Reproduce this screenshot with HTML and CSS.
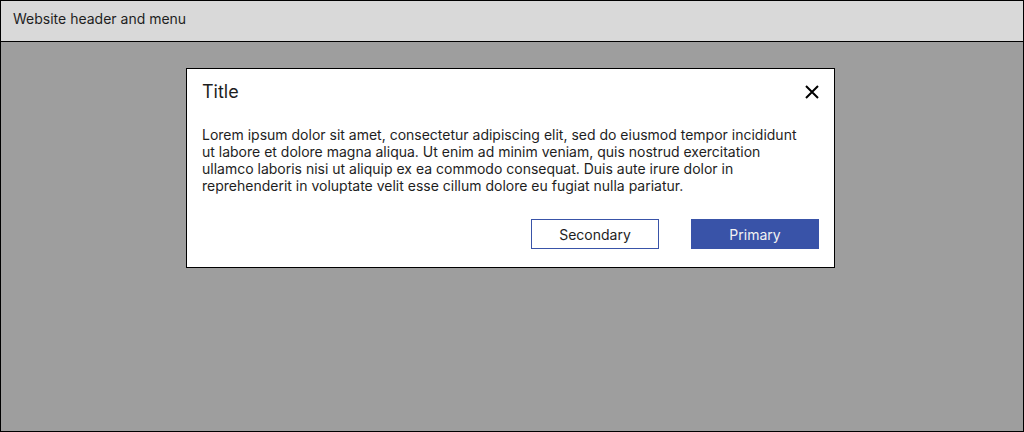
FILE: index.html
```html
<!DOCTYPE html>
<html lang="en">
<head>
    <meta charset="UTF-8">
    <meta name="viewport" content="width=device-width, initial-scale=1.0">
    <title>Modal</title>
    <link rel="stylesheet" href="styles.css">
</head>
<body>
    <div class="page">
        <!-- header -->
        <div class="site-header">Website header and menu</div>

        <!-- overlay + dialog -->
        <div class="overlay">
            <div class="modal">
                <div class="modal-head">
                    <h2 class="modal-title">Title</h2>
                    <button class="close-btn" aria-label="Close">
                        <svg width="14" height="14" viewBox="0 0 14 14">
                            <path d="M1 1 L13 13 M13 1 L1 13" stroke="#000" stroke-width="2" fill="none"/>
                        </svg>
                    </button>
                </div>
                <p class="modal-body">Lorem ipsum dolor sit amet, consectetur adipiscing elit, sed do eiusmod tempor incididunt ut labore et dolore magna aliqua. Ut enim ad minim veniam, quis nostrud exercitation ullamco laboris nisi ut aliquip ex ea commodo consequat. Duis aute irure dolor in reprehenderit in voluptate velit esse cillum dolore eu fugiat nulla pariatur.</p>
                <div class="modal-actions">
                    <button class="btn btn-secondary">Secondary</button>
                    <button class="btn btn-primary">Primary</button>
                </div>
            </div>
        </div>
    </div>
</body>
</html>
```

FILE: styles.css
```css
/* base */
* {
    box-sizing: border-box;
}

body {
    margin: 0;
    font-family: Inter, "Liberation Sans", sans-serif;
    color: #1e1e1e;
}

.page {
    width: 1024px;
    height: 432px;
    border: 1px solid #000;
    display: flex;
    flex-direction: column;
}

/* header */
.site-header {
    height: 41px;
    flex-shrink: 0;
    background: #d9d9d9;
    border-bottom: 1px solid #000;
    padding: 0 12px;
    font-size: 14px;
    line-height: 36px;
}

/* overlay */
.overlay {
    flex: 1;
    background: #9e9e9e;
    display: flex;
    align-items: flex-start;
    padding: 26px 0 0 185px;
}

.modal {
    width: 649px;
    background: #fff;
    border: 1px solid #000;
    padding: 11px 15px 18px 15px;
}

.modal-head {
    display: flex;
    justify-content: space-between;
    align-items: center;
    height: 24px;
}

.modal-title {
    margin: 0;
    font-size: 18px;
    font-weight: 400;
    line-height: 24px;
}

.close-btn {
    background: none;
    border: none;
    padding: 0;
    width: 14px;
    height: 14px;
    display: flex;
    cursor: pointer;
}

.modal-body {
    max-width: 600px;
    margin: 22px 0 0 0;
    font-size: 14px;
    line-height: 17px;
}

/* buttons */
.modal-actions {
    display: flex;
    justify-content: flex-end;
    gap: 32px;
    margin-top: 25px;
}

.btn {
    width: 128px;
    height: 30px;
    font-family: inherit;
    font-size: 14px;
    border: 1px solid #3953a8;
    border-radius: 0;
    cursor: pointer;
}

.btn-secondary {
    background: #fff;
    color: #1e1e1e;
}

.btn-primary {
    background: #3953a8;
    color: #f2f2f2;
}
```
